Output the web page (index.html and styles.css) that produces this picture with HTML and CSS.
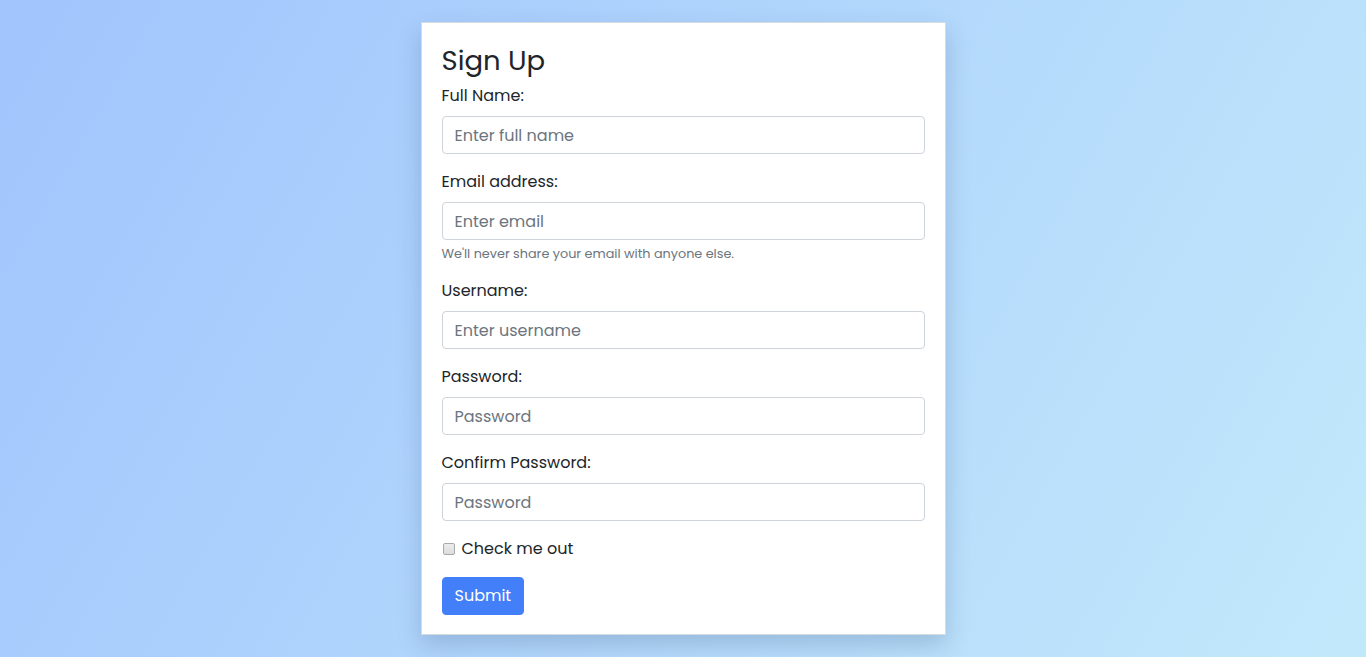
FILE: index.html
```html
<!DOCTYPE html>
<html lang="en">
<head>
<meta charset="utf-8">
<title>Sign Up</title>
<link rel="stylesheet" href="styles.css">
</head>
<body>
<main class="page">
  <form class="card">
    <h3 class="title">Sign Up</h3>
    <div class="group">
      <label class="label" for="name">Full Name:</label>
      <input class="input" id="name" type="text" placeholder="Enter full name">
    </div>
    <div class="group">
      <label class="label" for="email">Email address:</label>
      <input class="input" id="email" type="email" placeholder="Enter email">
      <small class="help">We'll never share your email with anyone else.</small>
    </div>
    <div class="group">
      <label class="label" for="user">Username:</label>
      <input class="input" id="user" type="text" placeholder="Enter username">
    </div>
    <div class="group">
      <label class="label" for="pw">Password:</label>
      <input class="input" id="pw" type="password" placeholder="Password">
    </div>
    <div class="group">
      <label class="label" for="pw2">Confirm Password:</label>
      <input class="input" id="pw2" type="password" placeholder="Password">
    </div>
    <div class="check">
      <input class="check-box" id="chk" type="checkbox">
      <label class="check-label" for="chk">Check me out</label>
    </div>
    <button class="btn" type="button">Submit</button>
  </form>
</main>
</body>
</html>
```
FILE: styles.css
```css
* { box-sizing: border-box; }
html, body { height: 100%; }
body {
  margin: 0;
  font-family: "Poppins", "Open Sans", "Liberation Sans", sans-serif;
  font-size: 16px;
  line-height: 1.5;
  color: #212529;
  background: linear-gradient(120deg, #a1c4fd 0%, #c2e9fb 100%);
  min-height: 657px;
}
.page {
  display: flex;
  justify-content: center;
  padding-top: 22px;
}
.card {
  width: 525px;
  background: #fff;
  border: 1px solid #d6dbe0;
  padding: 19px 20px 19px 20px;
  box-shadow: 0 10px 22px rgba(40, 70, 110, 0.22);
}
.title {
  margin: 0 0 4px;
  font-size: 27.5px;
  font-weight: 400;
  line-height: 38px;
  color: #212529;
}
.group {
  display: flex;
  flex-direction: column;
  margin-bottom: 16px;
}
.label {
  display: block;
  margin-bottom: 8px;
  line-height: 24px;
  font-size: 16px;
}
.input {
  display: block;
  width: 100%;
  height: 38px;
  padding: 6px 12px;
  font: inherit;
  font-size: 16px;
  color: #495057;
  background: #fff;
  border: 1px solid #ced4da;
  border-radius: 4px;
  outline: none;
}
.input::placeholder { color: #6c757d; opacity: 1; }
.help {
  display: block;
  margin-top: 4px;
  font-size: 12.8px;
  line-height: 19.2px;
  color: #6c757d;
}
.check {
  display: flex;
  align-items: center;
  height: 24px;
  margin-bottom: 16px;
}
.check-box {
  -webkit-appearance: none;
  appearance: none;
  width: 12px;
  height: 12px;
  margin: 0 7px 0 1px;
  background: linear-gradient(#ededed, #dcdcdc);
  border: 1px solid #a9a9a9;
  border-radius: 2px;
}
.check-box:checked {
  background: #437ff9;
  border-color: #437ff9;
}
.check-label { line-height: 24px; }
.btn {
  display: inline-block;
  height: 38px;
  padding: 6px 12px;
  font: inherit;
  font-size: 16px;
  color: #fff;
  background: #437ff9;
  border: 1px solid #437ff9;
  border-radius: 4px;
  cursor: pointer;
}
```
